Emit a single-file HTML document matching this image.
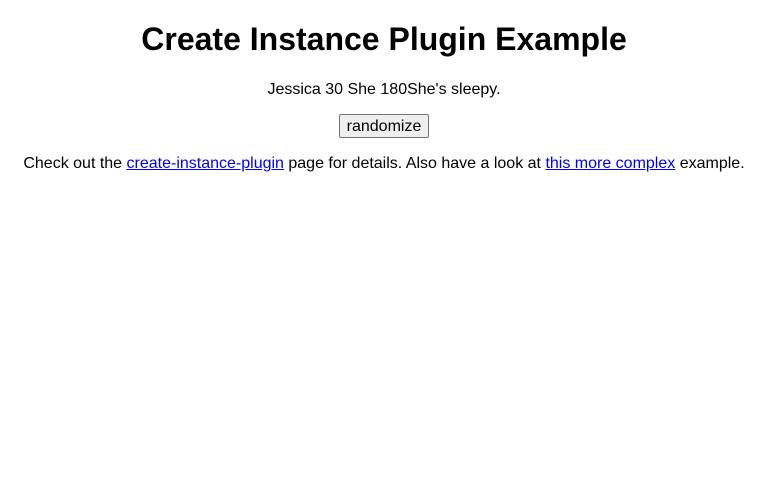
<!DOCTYPE html>
<html><head><style>
body{margin:8px;font-family:"Liberation Sans",sans-serif;text-align:center;background:#fff;color:#000;font-size:16px}
h1{font-size:32px;margin:21px 0 23px;line-height:37px}
p{margin:16px 0;line-height:18px}
button{font-family:"Liberation Sans",sans-serif;font-size:16px;padding:3px 7px 1px;border:1px solid #767676;border-radius:2px;background:#efefef;color:#000}
a{color:#00e}
</style></head><body>
<h1>Create Instance Plugin Example</h1>
<p style="margin-top:18px;margin-bottom:15px">Jessica 30 She 180She's sleepy.</p>
<button>randomize</button>
<p style="margin-top:17px">Check out the <a href="#">create-instance-plugin</a> page for details. Also have a look at <a href="#">this more complex</a> example.</p>
</body></html>
